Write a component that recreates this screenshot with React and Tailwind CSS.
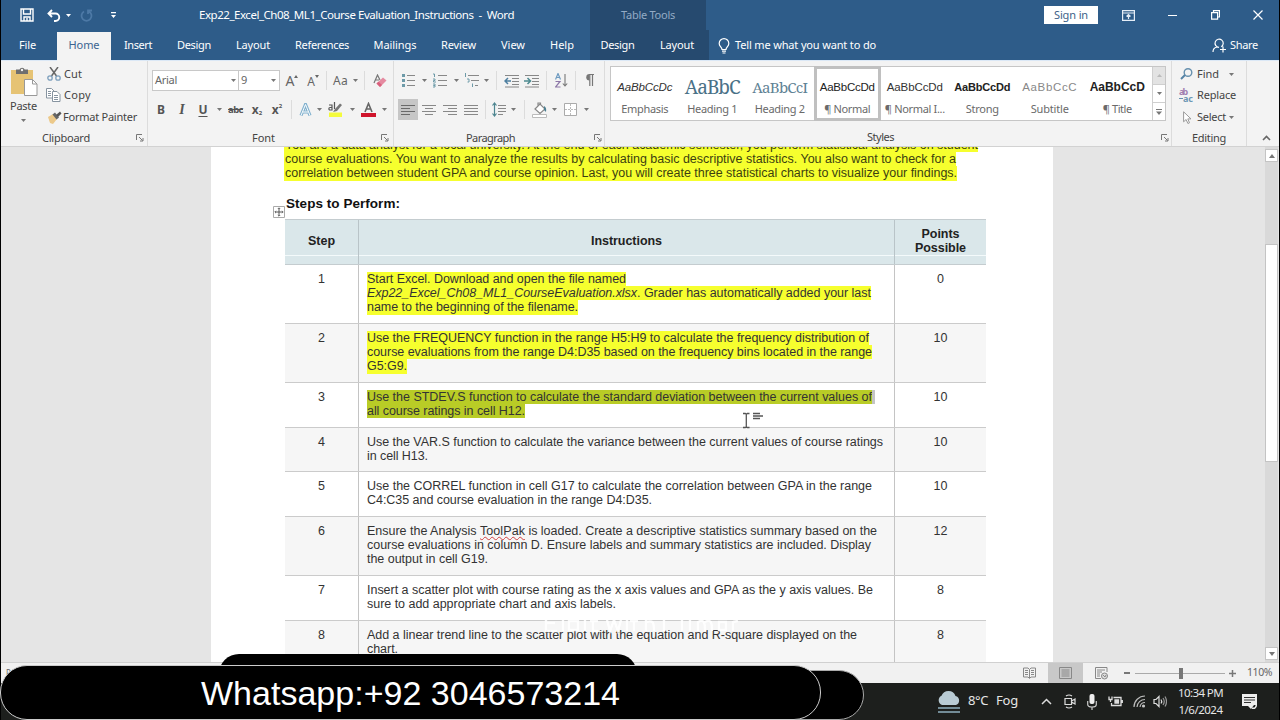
import React, { useLayoutEffect, useRef } from "react";

/* Text set to an exact width by spreading the difference between its letters. */
function Fit({ w, className = "", children }) {
  const ref = useRef(null);
  useLayoutEffect(() => {
    const el = ref.current;
    el.style.letterSpacing = "0px";
    const n = el.textContent.length;
    const natural = el.getBoundingClientRect().width;
    el.style.letterSpacing = (w - natural) / n + "px";
  }, [w]);
  return (
    <span ref={ref} className={"inline-block whitespace-pre " + className}>
      {children}
    </span>
  );
}

const Cell = ({ c = "", children }) => (
  <div className={"flex h-full shrink-0 items-center justify-center " + c}>{children}</div>
);

const Caret = ({ c = "w-[10px]" }) => (
  <Cell c={c}>
    <svg width="5" height="3" viewBox="0 0 5 3"><path d="M0 0h5L2.5 3z" fill="#777" /></svg>
  </Cell>
);

const Sep = ({ c = "w-[10px]" }) => (
  <Cell c={c}><div className="h-[19px] w-px bg-[#dcdcdc]" /></Cell>
);

const Launcher = () => (
  <svg width="8" height="8" viewBox="0 0 8 8" fill="none" stroke="#777">
    <path d="M.5 6V.5H6M3 3l3.5 3.5M7 4v3H4" />
  </svg>
);

const Tab = ({ c, w, children }) => (
  <div className={"flex h-full shrink-0 items-center justify-center " + c}>
    <Fit w={w}>{children}</Fit>
  </div>
);

function Lines({ rows, color = "#6a6a6a" }) {
  return (
    <svg width="14" height="14" viewBox="0 0 14 14" fill="none">
      {rows.map(([a, b], i) => (
        <path key={i} d={`M${a} ${2 + i * 3}.5H${b}`} stroke={color} />
      ))}
    </svg>
  );
}

function TitleBar() {
  return (
    <div className="flex h-[30px] items-center text-[11.5px] text-white">
      <div className="flex w-[198px] items-center pl-[19px]">
        <svg width="14" height="14" viewBox="0 0 14 14" fill="none" stroke="#fff" strokeWidth="1.4">
          <path d="M1 1h12v12H1zM3.5 1v5h7V1M4 13V9h6v4M7 10v3" />
        </svg>
        <svg className="ml-[13px]" width="14" height="13" viewBox="0 0 14 13" fill="none" stroke="#fff" strokeWidth="1.9">
          <path d="M5 1L1.5 4.500L5 8M2 4.500h6.500a3.700 3.700 0 0 1 0 7.500H7" />
        </svg>
        <svg className="ml-[5px]" width="5" height="3" viewBox="0 0 5 3"><path d="M0 0h5L2.500 3z" fill="#fff" /></svg>
        <svg className="ml-[9px]" width="13" height="13" viewBox="0 0 13 13" fill="none" stroke="#4d79a6" strokeWidth="1.800">
          <path d="M4 2.500A5 5 0 1 0 9 2.500M8 5V1.500h4" />
        </svg>
        <svg className="ml-[18px]" width="5" height="6" viewBox="0 0 5 6" fill="#fff"><path d="M0 0h5v1.200H0zM0 3h5L2.500 6z" /></svg>
      </div>
      <div className="w-[391px]"><Fit w={315}>Exp22_Excel_Ch08_ML1_Course Evaluation_Instructions  -  Word</Fit></div>
      <div className="flex h-full w-[116px] items-center justify-center bg-[#264a6f] text-[11px] text-[#93abc5]"><Fit w={54}>Table Tools</Fit></div>
      <div className="flex-1" />
      <div className="flex h-[18px] w-[54px] items-center justify-center bg-white text-[11px] text-[#3d5f88]"><Fit w={34}>Sign in</Fit></div>
      <Cell c="w-[60px]">
        <svg width="13" height="11" viewBox="0 0 13 11" fill="none" stroke="#e6eef7" strokeWidth="1.200">
          <path d="M.6.600h11.800v9.800H.6zM.6 3h11.800M6.500 9V4.800M4.500 6.500l2-2 2 2" />
        </svg>
      </Cell>
      <Cell c="w-[28px]"><div className="h-px w-[9px] bg-white" /></Cell>
      <Cell c="w-[58px]">
        <svg width="9" height="10" viewBox="0 0 9 10" fill="none" stroke="#fff" strokeWidth="1.200">
          <path d="M.6 2.600h6v6.500h-6zM2.500 2.500V.600h6V7H6.800" />
        </svg>
      </Cell>
      <Cell c="w-[28px]">
        <svg width="10" height="10" viewBox="0 0 10 10" stroke="#fff" strokeWidth="1.200"><path d="M.5.500l9 9M9.500.500l-9 9" /></svg>
      </Cell>
      <div className="w-[7px]" />
    </div>
  );
}

function TabBar() {
  return (
    <div className="flex h-[30px] text-[11px] text-white">
      <Tab c="mr-[3px] w-[53px] pt-px" w={17}>File</Tab>
      <Tab c="mt-[2px] w-[54px] bg-[#f3f3f3] pb-[3px] text-[#3c6491]" w={31}>Home</Tab>
      <Tab c="w-[54px] pt-px" w={28}>Insert</Tab>
      <Tab c="w-[58px] pt-px" w={34}>Design</Tab>
      <Tab c="w-[60px] pt-px" w={34}>Layout</Tab>
      <Tab c="w-[78px] pt-px" w={54}>References</Tab>
      <Tab c="w-[68px] pt-px" w={43}>Mailings</Tab>
      <Tab c="w-[59px] pt-px" w={35}>Review</Tab>
      <Tab c="w-[50px] pt-px" w={24}>View</Tab>
      <Tab c="w-[48px] pt-px" w={24}>Help</Tab>
      <div className="ml-[4px] flex bg-[#264a6f]">
        <Tab c="w-[55px] pt-px" w={34}>Design</Tab>
        <Tab c="w-[64px] pt-px" w={34}>Layout</Tab>
      </div>
      <div className="flex items-center pl-[9px] pt-px">
        <svg width="12" height="16" viewBox="0 0 12 16" fill="none" stroke="#fff" strokeWidth="1.200">
          <path d="M4 11.500C4 9 1.200 8.500 1.200 5.400a4.800 4.800 0 0 1 9.600 0C10.800 8.500 8 9 8 11.500zM4 13.200h4M4.500 15h3" />
        </svg>
        <Fit w={141} className="ml-[5px]">Tell me what you want to do</Fit>
      </div>
      <div className="flex-1" />
      <div className="flex items-center pr-[21px] pt-px">
        <svg width="15" height="15" viewBox="0 0 15 15" fill="none" stroke="#fff" strokeWidth="1.200">
          <path d="M1 14c0-3 1.500-4.500 4-5M6.800 9.300a4.100 4.100 0 1 1 2.500-.6M11 8.500v6M8 11.500h6M5 9l2 .4" />
        </svg>
        <Fit w={28} className="ml-[3px]">Share</Fit>
      </div>
    </div>
  );
}

function Clipboard() {
  return (
    <div className="flex w-[147px] flex-col border-r border-[#dcdcdc]">
      <div className="flex h-[68px]">
        <div className="flex w-[44px] flex-col items-center pl-[1px] pt-[6px]">
          <svg width="28" height="29" viewBox="0 0 28 29">
            <path d="M1 3h22v24H1z" fill="#e6c374" />
            <path d="M6 2.500h3.500a2.800 2.800 0 0 1 5.200 0H18V7H6z" fill="#6f6f6f" />
            <circle cx="12" cy="3" r="1.200" fill="#f3f3f3" />
            <path d="M14.500 12.500h8l4.500 4.500v11.500H14.500z" fill="#fff" stroke="#999" />
            <path d="M22.500 12.500V17H27" fill="none" stroke="#999" />
          </svg>
          <Fit w={27} className="mt-[2px] leading-[16px]">Paste</Fit>
          <svg className="mt-[5px]" width="5" height="3" viewBox="0 0 5 3"><path d="M0 0h5L2.500 3z" fill="#777" /></svg>
        </div>
        <div className="flex flex-col pt-[3px]">
          <div className="flex h-[20px] items-center">
            <svg className="mx-[2px]" width="14" height="14" viewBox="0 0 14 14" fill="none">
              <path d="M3 0l6.500 9M11 0L4.500 9" stroke="#666" strokeWidth="1.500" />
              <circle cx="3" cy="11" r="2.200" stroke="#7ea0bd" strokeWidth="1.300" /><circle cx="11" cy="11" r="2.200" stroke="#7ea0bd" strokeWidth="1.300" />
            </svg>
            <Fit w={18} className="ml-[1px]">Cut</Fit>
          </div>
          <div className="flex h-[22px] items-center">
            <svg className="mx-[1px]" width="15" height="14" viewBox="0 0 15 14" fill="#fff" stroke="#8794a0">
              <path d="M.5.500h5l2.500 2.500v7H.5zM2 3.500h3M2 5.500h3M2 7.500h3" /><path d="M6.500 3.500h4.500L14 6.500v7H6.500zM8 7.500h4M8 9.500h4M8 11.500h4" />
            </svg>
            <Fit w={27} className="ml-[2px]">Copy</Fit>
          </div>
          <div className="flex h-[22px] items-center">
            <svg className="ml-[3px]" width="14" height="13" viewBox="0 0 14 13">
              <path d="M0 6l5-3 4 5-4 5-3-1z" fill="#ecc98a" /><path d="M4.500 3.500L7 1.500l4 5-2.500 2z" fill="#666" /><path d="M8 4l4-3.500 1.500 2L10 6z" fill="#555" />
            </svg>
            <Fit w={74} className="ml-[1px]">Format Painter</Fit>
          </div>
        </div>
      </div>
      <div className="flex h-[19px] items-center pt-[2px]">
        <div className="w-[41px]" /><Fit w={48}>Clipboard</Fit><div className="flex-1" />
        <div className="mr-[3px]"><Launcher /></div>
      </div>
    </div>
  );
}

function FontGroup() {
  return (
    <div className="flex w-[246px] flex-col border-r border-[#dcdcdc]">
      <div className="mt-[8px] flex h-[24px] items-center text-[#666]">
        <div className="ml-[4px] flex h-[21px] w-[128px] items-center border border-[#c8c8c8] bg-white">
          <div className="flex-1 pl-[2px]"><Fit w={22}>Arial</Fit></div>
          <Caret c="w-[10px]" />
          <div className="flex h-full w-[41px] items-center border-l border-[#c8c8c8] pl-[2px]">
            <span className="flex-1">9</span><Caret c="mr-[1px] w-[10px]" />
          </div>
        </div>
        <Cell c="w-[24px]"><span className="text-[14px]">A</span><svg className="mb-[9px]" width="4" height="3" viewBox="0 0 4 3"><path d="M0 3h4L2 0z" fill="#666" /></svg></Cell>
        <Cell c="w-[18px]"><span className="pt-[2px] text-[12px]">A</span><svg className="mb-[9px]" width="4" height="3" viewBox="0 0 4 3"><path d="M0 0h4L2 3z" fill="#666" /></svg></Cell>
        <Sep c="w-[8px]" />
        <Cell c="w-[21px]"><Fit w={15} className="text-[12px]">Aa</Fit></Cell>
        <Caret c="w-[8px]" />
        <Sep c="w-[10px]" />
        <Cell c="w-[22px]">
          <svg width="14" height="14" viewBox="0 0 14 14"><path d="M1 9l3.500-8L7 6M2.200 6H6" fill="none" stroke="#777" strokeWidth="1.200" /><path d="M3.500 9.500L10 3.500l3.500 3L7 13z" fill="#e58aa0" /><path d="M3.500 9.500L5.500 7.700 9 11l-2 2z" fill="#d9607c" /></svg>
        </Cell>
      </div>
      <div className="mt-[6px] flex h-[24px] items-center pl-[2px] text-[12px] font-bold text-[#555]">
        <Cell c="w-[22px]">B</Cell>
        <Cell c="w-[20px]"><span className="font-['Liberation_Serif'] text-[14px] italic">I</span></Cell>
        <Cell c="w-[22px]"><span className="underline underline-offset-2">U</span></Cell>
        <Caret />
        <Cell c="w-[23px]"><Fit w={15} className="text-[9.500px] line-through">abc</Fit></Cell>
        <Cell c="w-[20px]">x<span className="pt-[7px] text-[6px]">2</span></Cell>
        <Cell c="w-[20px]">x<span className="pb-[7px] text-[6px]">2</span></Cell>
        <Sep c="w-[8px]" />
        <Cell c="w-[20px]">
          <svg width="13" height="14" viewBox="0 0 13 14" fill="none"><path d="M2 12.500L6.500 1.500 11 12.500M3.800 9h5.400" stroke="#7fb0ce" strokeWidth="3.200" /><path d="M2 12.500L6.500 1.500 11 12.500M3.800 9h5.400" stroke="#fff" strokeWidth="1" /></svg>
        </Cell>
        <Caret c="w-[9px]" />
        <Cell c="w-[23px]">
          <svg width="15" height="15" viewBox="0 0 15 15"><path d="M1 10.500h13V15H1z" fill="#f4fb3c" /><path d="M5 10l2-3 5-5.500 2 1.500-5 6z" fill="#777" /><path d="M1 3h3v5H2C.5 8 .5 5.500 2 5.500h2M6.500 0v7" fill="none" stroke="#555" strokeWidth="1.200" /></svg>
        </Cell>
        <Caret />
        <Cell c="w-[22px]">
          <svg width="15" height="15" viewBox="0 0 15 15"><path d="M0 11h15v4H0z" fill="#d0142c" /><path d="M4 10L7.500 1.500 11 10M5.200 7h4.600" fill="none" stroke="#666" strokeWidth="1.600" /></svg>
        </Cell>
        <Caret />
      </div>
      <div className="mt-[6px] flex h-[19px] items-center pt-[2px]">
        <div className="w-[104px]" /><Fit w={23}>Font</Fit><div className="flex-1" />
        <div className="mr-[4px]"><Launcher /></div>
      </div>
    </div>
  );
}

function ParagraphGroup() {
  const blue = "#6d9aa8";
  return (
    <div className="flex w-[211px] flex-col border-r border-[#dcdcdc]">
      <div className="mt-[8px] flex h-[24px] items-center pl-[3px]">
        <Cell c="w-[22px]">
          <svg width="13" height="15" viewBox="0 0 13 15"><path d="M5 2.500h8M5 7.500h8M5 12.500h8" stroke="#888" /><path d="M0 1h3v3H0zM0 6h3v3H0zM0 11h3v3H0z" fill={blue} /></svg>
        </Cell>
        <Caret />
        <Cell c="w-[22px]">
          <svg width="14" height="15" viewBox="0 0 14 15" fill="none"><path d="M5 2.500h9M5 7.500h9M5 12.500h9" stroke="#888" /><path d="M0 1h1.500v3M0 6h2v1.500H.5V9H3M0 11h2v1.500H.5 2V14H0" stroke={blue} /></svg>
        </Cell>
        <Caret />
        <Cell c="w-[21px]">
          <svg width="16" height="15" viewBox="0 0 16 15" fill="none"><path d="M4 2.500h11M7 7.500h8M11 12.500h3" stroke="#888" /><path d="M1.500 0v4M3 6h2v3H3.500M8.500 10.500V14" stroke={blue} /></svg>
        </Cell>
        <Caret c="w-[9px]" />
        <Sep />
        <Cell c="w-[21px]">
          <svg width="16" height="14" viewBox="0 0 16 14" fill="none"><path d="M1 1.500h14M8 4.500h7M8 7.500h7M8 10.500h7M1 13h14" stroke="#888" /><path d="M7 7H1.500M4 4L1 7l3 3" stroke="#4d7fa0" strokeWidth="1.500" /></svg>
        </Cell>
        <Cell c="w-[20px]">
          <svg width="16" height="14" viewBox="0 0 16 14" fill="none"><path d="M1 1.500h14M8 4.500h7M8 7.500h7M8 10.500h7M1 13h14" stroke="#888" /><path d="M0 7h6M3.500 4l3 3-3 3" stroke="#4d8a90" strokeWidth="1.500" /></svg>
        </Cell>
        <Sep c="w-[9px]" />
        <Cell c="w-[20px]">
          <svg width="13" height="15" viewBox="0 0 13 15" fill="none"><path d="M.5 6.500L3 .500l2.500 6M1.500 4.500h3" stroke="#6d9ac0" strokeWidth="1.200" /><path d="M.5 8.500h4.500L.5 14H5.500" stroke="#8d78a8" strokeWidth="1.200" /><path d="M10 1v12M7.800 10.500L10 13l2.200-2.500" stroke="#777" strokeWidth="1.100" /></svg>
        </Cell>
        <Sep c="w-[9px]" />
        <Cell c="w-[18px]">
          <svg width="9" height="13" viewBox="0 0 9 13"><path d="M4 .500h5M4.800.500V12M7.500.500V12" stroke="#777" strokeWidth="1.200" fill="none" /><path d="M4.500 0v6.500a3.200 3.200 0 0 1 0-6.500z" fill="#777" /></svg>
        </Cell>
      </div>
      <div className="mt-[6px] flex h-[24px] items-center pl-[4px]">
        <div className="flex h-[21px] w-[20px] items-center justify-center bg-[#c6c6c6]">
          <Lines rows={[[0, 14], [0, 9], [0, 14], [0, 9]]} />
        </div>
        <Cell c="w-[22px]"><Lines rows={[[0, 14], [3, 11], [0, 14], [3, 11]]} color="#888" /></Cell>
        <Cell c="w-[20px]"><Lines rows={[[0, 14], [5, 14], [0, 14], [5, 14]]} color="#888" /></Cell>
        <Cell c="w-[21px]"><Lines rows={[[0, 14], [0, 14], [0, 14], [0, 14]]} color="#888" /></Cell>
        <Sep c="w-[8px]" />
        <Cell c="w-[19px]">
          <svg width="14" height="15" viewBox="0 0 14 15" fill="none"><path d="M6 3.500h8M6 6.500h8M6 9.500h8M6 12.500h5" stroke="#888" /><path d="M2.500 1v13M.5 3.500L2.500 1l2 2.500M.5 11.500l2 2.500 2-2.500" stroke="#4d8590" strokeWidth="1.200" /></svg>
        </Cell>
        <Caret c="w-[10px]" />
        <Sep c="w-[12px]" />
        <Cell c="w-[19px]">
          <svg width="16" height="16" viewBox="0 0 16 16" fill="none"><path d="M3 7l5-5 5 5-5 4.500zM6 4V1h2.500v2" stroke="#888" strokeWidth="1.200" fill="#fff" /><path d="M12 4c2 1 2.500 3 2 6l-2-2z" fill="#4d7f90" /><path d="M.5 12.500h14v3H.5z" stroke="#bbb" fill="#fff" /></svg>
        </Cell>
        <Caret />
        <Cell c="w-[22px]">
          <svg width="13" height="13" viewBox="0 0 13 13" fill="#fff" stroke="#aaa"><path d="M.5.500h12v12H.5z" /><path d="M6.500 1v11M1 6.500h11" stroke="#bbb" strokeDasharray="2 1" /></svg>
        </Cell>
        <Caret />
      </div>
      <div className="mt-[6px] flex h-[19px] items-center pt-[2px]">
        <div className="w-[72px]" /><Fit w={49}>Paragraph</Fit><div className="flex-1" />
        <div className="mr-[2px]"><Launcher /></div>
      </div>
    </div>
  );
}

const STYLES = [
  ["AaBbCcDc", 55, "text-[11.500px] italic text-[#333]", "Emphasis", 47],
  ["AaBbC", 55, "font-['Noto_Serif','Liberation_Serif'] text-[19px] text-[#4a7187]", "Heading 1", 50],
  ["AaBbCcI", 55, "font-['Noto_Serif','Liberation_Serif'] text-[15px] text-[#5f8395]", "Heading 2", 50],
  ["AaBbCcDd", 55, "text-[11.500px] text-[#222]", "¶ Normal", 46],
  ["AaBbCcDd", 56, "text-[11.500px] text-[#333]", "¶ Normal I...", 60],
  ["AaBbCcDd", 56, "text-[11px] font-bold text-[#222]", "Strong", 33],
  ["AaBbCcC", 55, "text-[11.500px] text-[#888]", "Subtitle", 38],
  ["AaBbCcD", 55, "text-[12px] font-bold text-[#222]", "¶ Title", 29],
];

function StylesGroup() {
  return (
    <div className="flex w-[567px] flex-col border-r border-[#dcdcdc]">
      <div className="ml-[5px] mt-[5px] flex h-[57px] w-[556px] border border-[#c6c6c6] bg-white">
        {STYLES.map(([s, w, cls, name, nw], i) => (
          <div key={i} className={"flex w-[67.5px] shrink-0 flex-col items-center overflow-hidden " + (i === 3 ? "-my-px outline-[3px] -outline-offset-3 outline-[#c0c0c0] pt-px" : "")}>
            <div className="flex h-[39px] items-center font-['Liberation_Sans']"><Fit w={w} className={"leading-[24px] " + cls}>{s}</Fit></div>
            <Fit w={nw} className="-mt-[5px] leading-[15px] text-[#6a6a6a]">{name}</Fit>
          </div>
        ))}
        <div className="ml-auto flex w-[13px] flex-col border-l border-[#cfcfcf]">
          <div className="flex flex-1 items-center justify-center bg-[#e3e3e3]"><svg width="5" height="3" viewBox="0 0 5 3"><path d="M0 3h5L2.500 0z" fill="#bbb" /></svg></div>
          <div className="flex flex-1 items-center justify-center border-y border-[#cfcfcf]"><svg width="5" height="3" viewBox="0 0 5 3"><path d="M0 0h5L2.500 3z" fill="#777" /></svg></div>
          <div className="flex flex-1 items-center justify-center"><svg width="6" height="6" viewBox="0 0 6 6" fill="#777"><path d="M0 0h6v1H0zM0 2.500h6L3 6z" /></svg></div>
        </div>
      </div>
      <div className="mt-[6px] flex h-[19px] items-center pt-[2px]">
        <div className="w-[262px]" /><Fit w={27}>Styles</Fit><div className="flex-1" />
        <div className="mr-[2px]"><Launcher /></div>
      </div>
    </div>
  );
}

function Editing() {
  return (
    <>
      <div className="flex w-[75px] flex-col border-r border-[#dcdcdc]">
        <div className="flex h-[68px] flex-col pt-[3px]">
          <div className="flex h-[20px] items-center pl-[8px]">
            <svg width="13" height="12" viewBox="0 0 13 12" fill="none"><circle cx="8" cy="4.500" r="3.800" stroke="#6690ae" strokeWidth="1.400" /><path d="M5 7L1 11" stroke="#5583a5" strokeWidth="2" /></svg>
            <Fit w={22} className="ml-[4px]">Find</Fit><Caret c="ml-[7px] w-[10px]" />
          </div>
          <div className="flex h-[22px] items-center pl-[7px]">
            <div className="flex w-[15px] flex-col text-[9px] font-bold leading-[7px]">
              <Fit w={11} className="text-[#a27fb0]">ab</Fit>
              <span className="flex items-center"><svg width="4" height="3" viewBox="0 0 4 3"><path d="M0 1.500h4" stroke="#6690ae" /></svg><Fit w={10} className="text-[#6d98b5]">ac</Fit></span>
            </div>
            <Fit w={39} className="ml-[3px]">Replace</Fit>
          </div>
          <div className="flex h-[22px] items-center pl-[11px]">
            <svg width="9" height="13" viewBox="0 0 9 13"><path d="M.6.800v10l2.500-2.300 1.800 4 1.600-.7-1.700-3.900H8z" fill="#fff" stroke="#999" /></svg>
            <Fit w={29} className="ml-[5px]">Select</Fit><Caret c="w-[10px]" />
          </div>
        </div>
        <div className="flex h-[19px] items-center pl-[20px] pt-[2px]"><Fit w={34}>Editing</Fit></div>
      </div>
      <div className="flex flex-1 items-end justify-center pb-[5px]">
        <svg className="ml-[6px]" width="9" height="6" viewBox="0 0 9 6" fill="none" stroke="#666" strokeWidth="1.600"><path d="M1 5l3.500-3.500L8 5" /></svg>
      </div>
    </>
  );
}

const HL = "bg-[#f6ff2e]";
const ROWS = [
  { n: 1, p: 0, h: "h-[59px]", bg: "bg-white", mark: HL, lines: [[["Start Excel. Download and open the file named", 259]], [["Exp22_Excel_Ch08_ML1_CourseEvaluation.xlsx", 270, "italic"], [". Grader has automatically added your last", 234]], [["name to the beginning of the filename.", 211]]] },
  { n: 2, p: 10, h: "h-[59px]", bg: "bg-[#f6f6f6]", mark: HL, lines: [[["Use the FREQUENCY function in the range H5:H9 to calculate the frequency distribution of", 502]], [["course evaluations from the range D4:D35 based on the frequency bins located in the range", 505]], [["G5:G9.", 40]]] },
  { n: 3, p: 10, h: "h-[45px]", bg: "bg-white", mark: "bg-[#b9cc26]", tail: true, lines: [[["Use the STDEV.S function to calculate the standard deviation between the current values of", 505]], [["all course ratings in cell H12.", 158]]] },
  { n: 4, p: 10, h: "h-[44px]", bg: "bg-[#f6f6f6]", lines: [[["Use the VAR.S function to calculate the variance between the current values of course ratings", 516]], [["in cell H13.", 61]]] },
  { n: 5, p: 10, h: "h-[45px]", bg: "bg-white", lines: [[["Use the CORREL function in cell G17 to calculate the correlation between GPA in the range", 505]], [["C4:C35 and course evaluation in the range D4:D35.", 285]]] },
  { n: 6, p: 12, h: "h-[59px]", bg: "bg-[#f6f6f6]", lines: [[["Ensure the Analysis ", 113], ["ToolPak", 45, "underline decoration-[#d04040] decoration-wavy decoration-[1px] underline-offset-1"], [" is loaded. Create a descriptive statistics summary based on the", 352]], [["course evaluations in column D. Ensure labels and summary statistics are included. Display", 504]], [["the output in cell G19.", 121]]] },
  { n: 7, p: 8, h: "h-[45px]", bg: "bg-white", lines: [[["Insert a scatter plot with course rating as the x axis values and GPA as the y axis values. Be", 506]], [["sure to add appropriate chart and axis labels.", 249]]] },
  { n: 8, p: 8, h: "h-[59px]", bg: "bg-[#f6f6f6]", lines: [[["Add a linear trend line to the scatter plot with the equation and R-square displayed on the", 490]], [["chart.", 31]]] },
];

function DocTable() {
  return (
    <div className="ml-[74px] mt-[6px] w-[701px] text-[12.500px] leading-[14.400px] text-[#333]">
      <div className="flex h-[46px] border-y border-[#c4cccf] bg-[#dae7ea] text-[12.500px] font-bold text-[#222]">
        <div className="flex w-[74px] items-center justify-center border-r border-[#b9c4c8]"><Fit w={27}>Step</Fit></div>
        <div className="flex w-[536px] items-center justify-center border-r border-[#b9c4c8]"><Fit w={71}>Instructions</Fit></div>
        <div className="flex flex-1 flex-col items-center justify-center pb-px leading-[14px]"><Fit w={38}>Points</Fit><Fit w={51}>Possible</Fit></div>
      </div>
      <div className="-mt-[10px] mb-[9px] h-px bg-[#f4fafb]" />
      {ROWS.map((r) => (
        <div key={r.n} className={"flex border-b border-[#cbcbcb] " + r.h + " " + r.bg}>
          <div className="w-[74px] border-r border-[#c4c4c4] pt-[7px] text-center">{r.n}</div>
          <div className="w-[536px] border-r border-[#c4c4c4] pl-[8px] pt-[7px]">
            {r.lines.map((l, i) => (
              <div key={i} className="flex h-[14.400px]">
                <div className={"flex h-[14.400px] " + (r.mark || "")}>
                  {l.map(([t, w, c], j) => <Fit key={j} w={w} className={c || ""}>{t}</Fit>)}
                </div>
                {r.tail && i === 0 && <div className="h-[14.400px] w-[3px] bg-[#c4c4c4]" />}
              </div>
            ))}
          </div>
          <div className="flex-1 pt-[7px] text-center">{r.p}</div>
        </div>
      ))}
    </div>
  );
}

function DocumentArea() {
  return (
    <div className="relative flex h-[515px] overflow-hidden bg-[#e5e5e5]">
      <div className="ml-[210px] h-[515px] w-[842px] overflow-hidden bg-white">
        <div className="-mt-[9px] ml-[73px] text-[12.500px] leading-[14.200px] text-[#3c3f10]">
          {[["You are a data analyst for a local university. At the end of each academic semester, you perform statistical analysis on student", 693],
            ["course evaluations. You want to analyze the results by calculating basic descriptive statistics. You also want to check for a", 671],
            ["correlation between student GPA and course opinion. Last, you will create three statistical charts to visualize your findings.", 672]].map(([t, w], i) => (
            <div key={i} className="flex h-[14.200px]"><div className={"h-[14.200px] pl-px " + HL}><Fit w={w}>{t}</Fit></div></div>
          ))}
        </div>
        <div className="mt-[15px] flex h-[17px] items-center pl-[75px] text-[13.500px] font-bold text-[#111]"><Fit w={114}>Steps to Perform:</Fit></div>
        <DocTable />
      </div>
      <div className="flex-1" />
      <div className="mr-px flex w-[13px] flex-col bg-[#d9d9d9]">
        <div className="mt-[2px] flex h-[13px] items-center justify-center border border-[#c4c4c4] bg-white"><svg width="6" height="4" viewBox="0 0 6 4"><path d="M0 4h6L3 0z" fill="#777" /></svg></div>
        <div className="mt-[82px] h-[218px] border border-[#c4c4c4] bg-white" />
        <div className="mb-[2px] mt-auto flex h-[13px] items-center justify-center border border-[#c4c4c4] bg-white"><svg width="6" height="4" viewBox="0 0 6 4"><path d="M0 0h6L3 4z" fill="#777" /></svg></div>
      </div>
      {/* table move handle */}
      <svg className="absolute left-[272px] top-[59px]" width="12" height="12" viewBox="0 0 12 12" fill="none"><path d="M.5.500h11v11H.5z" fill="#fff" stroke="#aaa" /><path d="M6 2v8M2 6h8" stroke="#555" /><path d="M4.800 3L6 1.800 7.200 3M4.800 9L6 10.200 7.200 9M3 4.800L1.800 6 3 7.200M9 4.800L10.200 6 9 7.200" stroke="#555" strokeWidth=".8" /></svg>
      {/* text cursor */}
      <svg className="absolute left-[740px] top-[263px]" width="24" height="20" viewBox="0 0 24 20" fill="none"><path d="M2 3.500h2.300l1 .8 1-.8h2.200M5.300 4v13M2 17.500h2.300l1-.8 1 .8h2.200" stroke="#555" strokeWidth="1.300" /><path d="M12 3.500h7M12 6h10M12 8.500h7" stroke="#555" strokeWidth="1.300" /></svg>
      {/* faded caption */}
      <svg className="absolute left-[542px] top-[465px]" width="198" height="22" viewBox="0 0 198 22" fill="none" stroke="#fff" strokeWidth="2.400" opacity=".9">
        <path d="M14 4H3v15h11M3 11h9M20 8v11M26 4v15M26 9h9v9h-9M42 8v11M50 5v14h5M47 9h8M64 8l3 11 4-11 4 11 3-11M84 8v11M91 5v14M87 9h8M103 5v14M103 10c7-2 8 0 8 9M121 5h12M121 5v14M139 8v11M147 5v14M155 9v10M155 10c6-3 7 0 7 9M162 10c6-3 7 0 7 9M176 10h7v8h-7zM190 9v10M190 10l5-1" />
      </svg>
    </div>
  );
}

function StatusBar() {
  return (
    <div className="flex h-[21px] items-center border-t border-[#d0d0d0] bg-[#f1f1f1] text-[10.500px] text-[#666]">
      <span className="ml-[5px] text-[8px]">P</span>
      <div className="flex-1" />
      <Cell c="w-[34px]">
        <svg width="13" height="12" viewBox="0 0 13 12" fill="none" stroke="#888"><path d="M.5 1h4.500l1.500 1.500L8 1h4.500v9H8l-1.500 1.500L5 10H.5zM6.500 2.500V11M2 3.500h3M2 5.500h3M2 7.500h3M8 3.500h3M8 5.500h3M8 7.500h3" /></svg>
      </Cell>
      <div className="ml-[2px] flex h-full w-[35px] items-center justify-center bg-[#c8c8c8]">
        <svg width="13" height="12" viewBox="0 0 13 12" fill="none" stroke="#888"><path d="M.5.500h12v11H.5zM2.500 3h8M2.500 5h8M2.500 7h8M2.500 9h8" /></svg>
      </div>
      <Cell c="w-[36px]">
        <svg width="13" height="13" viewBox="0 0 13 13" fill="none" stroke="#888"><path d="M12 5V.500H.5v11H6M2 3h8M2 5h5M2 7h3M2 9h3" /><circle cx="9.500" cy="9" r="3" fill="#ddd" /><path d="M8 8l2 2 1-2" /></svg>
      </Cell>
      <Cell c="w-[16px]"><div className="h-[2px] w-[6px] bg-[#777]" /></Cell>
      <div className="flex w-[90px] items-center"><div className="h-px w-[44px] bg-[#aaa]" /><div className="h-[11px] w-[4px] bg-[#777]" /><div className="h-px flex-1 bg-[#aaa]" /></div>
      <Cell c="w-[15px]"><svg width="7" height="7" viewBox="0 0 7 7" stroke="#777" strokeWidth="1.500"><path d="M0 3.500h7M3.500 0v7" /></svg></Cell>
      <div className="w-[39px] pl-[7px]"><Fit w={25}>110%</Fit></div>
    </div>
  );
}

function Taskbar() {
  return (
    <div className="flex h-[37px] items-center bg-[#1d1f1d] text-[11.500px] text-[#e6e6e6]">
      <div className="flex-1" />
      <svg width="24" height="24" viewBox="0 0 24 24"><path d="M5 15a5 5 0 0 1-.5-9.200A7.500 7.500 0 0 1 18.500 6 4.700 4.700 0 0 1 19 15z" fill="#b9cbd4" /><path d="M1 18h22M1 22h22" stroke="#8fb0bf" strokeWidth="1.600" /></svg>
      <div className="ml-[7px] flex w-[73px] items-center pb-px text-[13px]"><Fit w={20}>8°C</Fit><Fit w={22} className="ml-[8px]">Fog</Fit></div>
      <svg width="11" height="7" viewBox="0 0 11 7" fill="none" stroke="#ddd" strokeWidth="1.500"><path d="M1 6l4.500-4.500L10 6" /></svg>
      <svg className="ml-[12px]" width="12" height="15" viewBox="0 0 12 15" fill="none" stroke="#ddd" strokeWidth="1.200"><path d="M1 4.500h6.500v6H1zM7.500 7l3.500-2v5l-3.500-2M2 2q3-2 6 0M2 13q3 2 6 0" /></svg>
      <svg className="ml-[11px]" width="10" height="16" viewBox="0 0 10 16" fill="none"><rect x="2.500" y="0" width="5" height="10" rx="2" fill="#eee" /><path d="M.7 7v3.500Q.7 13 5 13t4.300-2.500V7M5 13v3" stroke="#ccc" strokeWidth="1.200" /></svg>
      <svg className="ml-[11px]" width="15" height="11" viewBox="0 0 15 11" fill="none" stroke="#ddd" strokeWidth="1.300"><path d="M5.500 1.500h7.500v8H3.500V7M14.300 4v3" /><path d="M7 4h3.500v3H7z" fill="#ddd" /><path d="M1 .500v3h3v-3M2.500 3.500V6" /></svg>
      <svg className="ml-[10px]" width="13" height="13" viewBox="0 0 13 13" fill="none" stroke="#bbb" strokeWidth="1.200"><path d="M1 12A11 11 0 0 1 12 1M4 12a8 8 0 0 1 8-7.500M7 12a5 5 0 0 1 5-4.500" /><circle cx="10.500" cy="11" r="1" fill="#eee" /></svg>
      <svg className="ml-[7px]" width="14" height="13" viewBox="0 0 14 13" fill="none" stroke="#ddd" strokeWidth="1.200"><path d="M1 4.500h2L6 1.500v10L3 8.500H1zM8 4.500q1.500 2 0 4" /><path d="M10 3q2.500 3.500 0 7M12 1.500q3 5 0 10" stroke="#999" /></svg>
      <div className="ml-[10px] flex w-[47px] flex-col items-center pb-[2px] leading-[17px]"><Fit w={45}>10:34 PM</Fit><Fit w={44}>1/6/2024</Fit></div>
      <svg className="ml-[17px] mr-[21px]" width="17" height="16" viewBox="0 0 17 16"><path d="M1 0h15v11l-3 0-3 4-3-3H1z" fill="#eee" /><path d="M3 3.500h11M3 6h11M3 8.500h7" stroke="#333" /><path d="M11 14a3 3 0 0 0 4-4" stroke="#eee" strokeWidth="1.500" fill="none" /></svg>
    </div>
  );
}

export default function App() {
  return (
    <div className="relative h-[720px] w-[1280px] overflow-hidden bg-black px-px font-['Liberation_Sans',sans-serif]">
      <div className="bg-[#2e5c89] font-['Noto_Sans',sans-serif]">
        <TitleBar />
        <TabBar />
      </div>
      <div className="flex h-[87px] border-b border-t border-b-[#d2d2d2] border-t-[#dbe8f6] bg-[#f3f3f3] font-['Noto_Sans',sans-serif] text-[11px] text-[#444]">
        <Clipboard />
        <FontGroup />
        <ParagraphGroup />
        <StylesGroup />
        <Editing />
      </div>
      <DocumentArea />
      <div className="font-['Noto_Sans',sans-serif]">
        <StatusBar />
        <Taskbar />
      </div>
      {/* contact banner over the window */}
      <div className="absolute left-[219px] top-[654px] h-[40px] w-[418px] rounded-[20px] bg-black" />
      <div className="absolute left-[760px] top-[670px] h-[50px] w-[104px] rounded-r-[25px] border border-[#aaa] bg-black" />
      <div className="absolute left-0 top-[665px] flex h-[55px] w-[821px] items-center justify-center rounded-[27px] border border-[#ccc] bg-black pt-[2px] text-[34px] text-white">
        <Fit w={419}>Whatsapp:+92 3046573214</Fit>
      </div>
    </div>
  );
}
